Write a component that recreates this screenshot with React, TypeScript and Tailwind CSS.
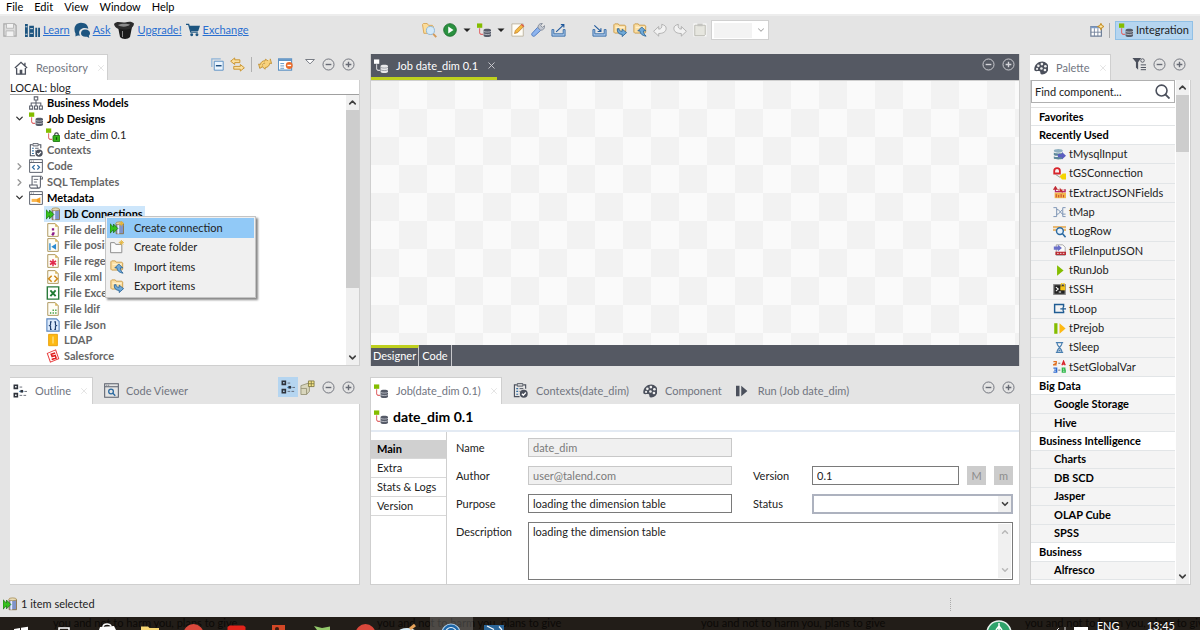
import type { ReactNode } from 'react';
import { clsx } from 'clsx';
import { ChevronDown, ChevronUp, ChevronRight, X } from 'lucide-react';

/* ---------- icons ---------- */

interface IconProps {
  className?: string;
  children?: ReactNode;
}

function Icon({ className = 'size-[14px]', children }: IconProps) {
  return (
    <svg viewBox="0 0 16 16" fill="none" aria-hidden="true" className={clsx('shrink-0', className)}>
      {children}
    </svg>
  );
}

function JobIcon({ className, light, locked }: { className?: string; light?: boolean; locked?: boolean }) {
  const disc = light ? '#e8e8ea' : '#565b68';
  return (
    <Icon className={className}>
      <rect x="0" y="0.5" width="6" height="5" fill={light ? '#fff' : '#84bd00'} />
      <path d="M3 6v5.5l1.5 1.5H7" stroke={light ? '#d6d6da' : '#e0696b'} strokeWidth="1.2" />
      {locked ? (
        <>
          <path d="M10 9V7.5a2 2 0 0 1 4 0V9" stroke="#3b3f49" strokeWidth="1.3" />
          <rect x="8" y="8.5" width="8" height="7" rx="1" fill="#36b31c" stroke="#17720d" />
          <path d="M12 10.5v3" stroke="#0d4d08" strokeWidth="1.4" />
        </>
      ) : (
        <>
          <path d="M7.500 8c0-2 8.500-2 8.500 0v6.500c0 2-8.500 2-8.500 0z" fill={disc} />
          <path d="M7.500 9.500c1 1.200 7.500 1.200 8.500 0M7.500 12.300c1 1.200 7.500 1.200 8.500 0" stroke={light ? '#8b8e97' : '#c9ccd4'} strokeWidth="0.900" />
        </>
      )}
    </Icon>
  );
}

function DbIcon({ className, star }: { className?: string; star?: boolean }) {
  return (
    <Icon className={className}>
      <path d="M7 3h8.5v11.5H7z" fill="#7f93c9" stroke="#8a6d3b" />
      <path d="M9.500 3v11.500" stroke="#e5ecff" strokeWidth="2" />
      <ellipse cx="11" cy="2.6" rx="4.4" ry="1.6" fill="#e8dcb8" stroke="#a08445" strokeWidth="0.8" />
      <path d="M0 3l4 4V3.5L9 8.5l-5 5V10l-4 4z" fill="#35c21c" stroke="#17650f" strokeWidth="0.8" />
      {star && <path d="M13 0v6M10 3h6M11 1l4 4M15 1l-4 4" stroke="#e2b33a" />}
    </Icon>
  );
}

function PaletteIcon({ className }: { className?: string }) {
  return (
    <Icon className={className}>
      <path d="M9.500 0.500A7.300 7.300 0 0 1 9 15.300c-2.500 0-1.200-2.700-2.400-3.600C5 10.500 0 13.500 0.300 9 0.600 4.500 4.500 0.500 9.500 0.500z" fill="#4b505c" />
      <circle cx="5" cy="5.500" r="1.500" fill="#eee" />
      <circle cx="9" cy="3.500" r="1.500" fill="#eee" />
      <circle cx="13" cy="6" r="1.500" fill="#eee" />
      <circle cx="12.500" cy="10.300" r="1.500" fill="#eee" />
      <circle cx="8.500" cy="8.500" r="1.500" fill="#eee" />
      <circle cx="3.500" cy="9" r="1.200" fill="#eee" />
    </Icon>
  );
}

function ContextsIcon({ className }: { className?: string }) {
  return (
    <Icon className={className}>
      <path d="M7 14.500H1.500V2H4M11 2h2.500v4" stroke="#4b505c" strokeWidth="1.200" />
      <path d="M4.500 0.700h6v2.600h-6z" stroke="#4b505c" />
      <path d="M3.500 6h2M3.500 9h2M3.500 12h2" stroke="#2c6aa0" strokeWidth="1.300" />
      <path d="M7 6h4M7 9h1" stroke="#4b505c" />
      <circle cx="11.500" cy="11.500" r="4.200" fill="#4b505c" />
      <path d="M9.500 11.500l1.500 1.600 2.700-3" stroke="#fff" strokeWidth="1.300" />
    </Icon>
  );
}

function OutlineIcon({ className }: { className?: string }) {
  return (
    <Icon className={className}>
      <path d="M1.500 1.500h3.500v3.500h-3.500zM1.500 11h3.500v3.500h-3.500z" stroke="#2f333c" strokeWidth="1.800" />
      <path d="M7.500 3.500h3M7.500 13h3M12 13h3M13 8.500h3" stroke="#5a5f6b" />
      <path d="M7 8.500h5" stroke="#4a90c8" strokeWidth="1.400" />
      <rect x="8.500" y="6.800" width="3" height="3" fill="#2f333c" />
    </Icon>
  );
}

function WindowIcon({ className, children }: IconProps) {
  return (
    <Icon className={className}>
      <path d="M0.700 0.700h14.600v14.600H0.700zM0.700 4h14.600" stroke="#5a5f6b" strokeWidth="1.100" />
      <path d="M2.500 2.400h1M4.500 2.400h1" stroke="#5a5f6b" />
      {children}
    </Icon>
  );
}

function FileIcon({ children }: IconProps) {
  return (
    <Icon>
      <path d="M2 0.700h8.500L14 4.200v11.100H2z" fill="#fffdf5" stroke="#a58d4f" />
      <path d="M10.500 0.700v3.500H14z" fill="#d7b55a" />
      {children}
    </Icon>
  );
}

function FolderItemsIcon({ className, up }: { className?: string; up?: boolean }) {
  return (
    <Icon className={className}>
      <path d="M1 10.500V2l1-1h4l1 1.500h6.500l1 1v7l-1 1H2z" fill="#fbdfa5" stroke="#c9973f" />
      <path d="M3 5h10" stroke="#fff0cc" strokeWidth="1.500" />
      {up ? (
        <path d="M10 4.500L5.500 9H8c0 3 2.500 5.500 7 6-2-1.500-3-3.500-3-6h2.500z" fill="#6fa9d8" stroke="#1f5c93" strokeWidth="0.900" />
      ) : (
        <path d="M5 6.500c-0.500 4 1.500 6.500 5.500 6.500v2.500L15.500 11 10.500 7v2.500C8 9.500 6.800 8.500 7 6.500z" fill="#6fa9d8" stroke="#1f5c93" strokeWidth="0.900" />
      )}
    </Icon>
  );
}

function TrayIcon({ inward }: { inward?: boolean }) {
  return (
    <Icon className="size-[15px]">
      <path d="M1 7v7h14V7h-2v4.500H3V7z" fill="#a9c8ec" stroke="#3a6ea8" />
      {inward ? (
        <path d="M2.500 2.500l7 6.500M9.500 5.500v3.500H6" stroke="#20599c" strokeWidth="1.200" />
      ) : (
        <path d="M5.500 9.500l8-7.500M10.500 1.700h3.200v3.200" stroke="#20599c" strokeWidth="1.200" />
      )}
    </Icon>
  );
}

function MinIcon({ className = 'text-[#666a74]' }: { className?: string }) {
  return (
    <Icon className={clsx('size-[13px]', className)}>
      <circle cx="8" cy="8" r="6.800" stroke="currentColor" strokeWidth="1.100" />
      <path d="M4.500 8h7" stroke="currentColor" strokeWidth="1.700" />
    </Icon>
  );
}

function MaxIcon({ className = 'text-[#666a74]' }: { className?: string }) {
  return (
    <Icon className={clsx('size-[13px]', className)}>
      <circle cx="8" cy="8" r="6.800" stroke="currentColor" strokeWidth="1.100" />
      <path d="M4.500 8h7M8 4.500v7" stroke="currentColor" strokeWidth="1.700" />
    </Icon>
  );
}

/* ---------- shared bits ---------- */

function IconButton({ label, className, children }: { label: string; className?: string; children: ReactNode }) {
  return (
    <button type="button" aria-label={label} className={clsx('flex shrink-0 items-center justify-center', className)}>
      {children}
    </button>
  );
}

function WindowButtons({ className }: { className?: string }) {
  return (
    <div className="flex items-center gap-[7px]">
      <IconButton label="Minimize">
        <MinIcon className={className} />
      </IconButton>
      <IconButton label="Maximize">
        <MaxIcon className={className} />
      </IconButton>
    </div>
  );
}

function ActiveTab({ icon, label, className }: { icon: ReactNode; label: string; className?: string }) {
  return (
    <button
      type="button"
      className={clsx(
        'flex items-center border-t border-r border-[#cfcfcf] bg-white pr-1 whitespace-nowrap text-[#71757f]',
        className
      )}
    >
      {icon}
      <span>{label}</span>
      <X className="ml-auto size-[10px] shrink-0 text-[#d4d4d4]" strokeWidth={1.5} />
    </button>
  );
}

function ScrollBar({ children }: { children?: ReactNode }) {
  return (
    <div className="flex w-[13px] shrink-0 flex-col items-center bg-[#f0f0f0]">
      <div className="flex h-[15px] items-center">
        <ChevronUp className="size-[11px] text-[#404040]" strokeWidth={3.5} />
      </div>
      {children}
      <div className="mt-auto flex h-[15px] items-center">
        <ChevronDown className="size-[11px] text-[#404040]" strokeWidth={3.5} />
      </div>
    </div>
  );
}

/* ---------- top bars ---------- */

function MenuBar() {
  return (
    <nav className="flex h-[14px] shrink-0 items-center gap-[11px] bg-white pl-[6px] text-black">
      {['File', 'Edit', 'View', 'Window', 'Help'].map((item) => (
        <button key={item} type="button">
          {item}
        </button>
      ))}
    </nav>
  );
}

function ToolLink({ icon, label }: { icon: ReactNode; label: string }) {
  return (
    <a href="#" className="flex items-center gap-[3px] text-[#2a6fd0] underline">
      {icon}
      {label}
    </a>
  );
}

function Toolbar() {
  return (
    <div className="flex h-[30px] shrink-0 items-center border-t-2 border-[#ededed] pr-[7px]">
      <div className="flex w-[422px] shrink-0 items-center gap-[4px] pl-[3px]">
        <IconButton label="Save" className="mr-[4px]">
          <Icon>
            <path d="M1 1h12l2 2v12H1z" fill="#ddd" stroke="#aaa" strokeWidth="1.400" />
            <path d="M4 1v5h8V1M3.500 15V9h9v6" fill="#f2f2f2" stroke="#b5b5b5" />
          </Icon>
        </IconButton>
        <ToolLink
          label="Learn"
          icon={
            <Icon className="size-[15px]">
              <path d="M0 1h3v14H0zM4.500 3h5v12h-5zM11 5h2v10h-2zM14 5h2v10h-2z" fill="#1d5580" />
              <path d="M5.500 6h3M5.500 11h3M0.500 4h2M0.500 12h2" stroke="#e4e4e4" />
            </Icon>
          }
        />
        <ToolLink
          label="Ask"
          icon={
            <Icon className="size-[16px]">
              <path d="M1.500 11.500C-0.500 8 0 1 7 0.700c5 0 7 2.800 7.300 6C12 5.500 8 5.500 6 8c-1.300 1.700-1.200 4 0.200 5.800C4.500 13 3 13.500 1.500 14.500z" fill="#1d5580" />
              <path d="M11 7.500c3.500 0 5 1.800 5 3.700 0 1-0.500 2-1.200 2.600l0.500 2.200-2.300-1.300c-4 0.500-6-1.300-6-3.500s1.800-3.700 4-3.700z" fill="#1d5580" />
            </Icon>
          }
        />
        <ToolLink
          label="Upgrade!"
          icon={
            <svg viewBox="0 0 20 18" className="h-[18px] w-[20px] shrink-0" aria-hidden="true">
              <path d="M4 6l2 10c2 2.500 8 2.500 10 0l2-10z" fill="#1b1b1b" />
              <path d="M0 3C3-0.500 7 2 11 1.500c4-1 7-1 9 1-0.500 5-5 6-9 6C6 8.500 1 8 0 3z" fill="#2c2c2c" />
              <path d="M4 4c3-1.500 9-1.500 12-0.500-2 2.500-9 3-12 0.500z" fill="#8c8c8c" />
              <path d="M8.500 10v6" stroke="#8a8a8a" />
            </svg>
          }
        />
        <ToolLink
          label="Exchange"
          icon={
            <Icon>
              <path d="M0 1.500h3l2.500 9h8" stroke="#1d5580" strokeWidth="1.500" fill="none" />
              <path d="M3.500 3H16l-2 6H5.200z" fill="#1d5580" />
              <circle cx="6.500" cy="13.500" r="1.700" fill="#1d5580" />
              <circle cx="12.500" cy="13.500" r="1.700" fill="#1d5580" />
            </Icon>
          }
        />
      </div>

      <div className="flex shrink-0 items-center gap-[6px]">
        <IconButton label="Find">
          <Icon className="size-[15px]">
            <path d="M0.500 1.500l1-1h4L7 2.500h4l1 1V10l-1 1H2z" fill="#fbdc9a" stroke="#d9a85a" />
            <circle cx="9" cy="8" r="4.300" fill="#d3e9f9" stroke="#8db4d4" />
            <path d="M12 11.500l3.200 3.500" stroke="#d39a5a" strokeWidth="2" />
          </Icon>
        </IconButton>
        <IconButton label="Run">
          <Icon>
            <circle cx="8" cy="8" r="7.200" fill="#2a9140" stroke="#1d6f2d" />
            <path d="M6 4l6 4-6 4z" fill="#fff" />
          </Icon>
        </IconButton>
        <IconButton label="Run history">
          <Icon className="size-[8px]">
            <path d="M1 5h14l-7 7z" fill="#222" />
          </Icon>
        </IconButton>
        <IconButton label="New job">
          <JobIcon />
        </IconButton>
        <IconButton label="New item">
          <Icon className="size-[8px]">
            <path d="M1 5h14l-7 7z" fill="#222" />
          </Icon>
        </IconButton>
        <IconButton label="Edit">
          <Icon>
            <path d="M1 1h13v14H1z" fill="#fffdf6" stroke="#b9b19b" />
            <path d="M4 12l1-3.500L12 1.500l2.500 2.500-7 7z" fill="#f4b942" stroke="#b9772a" strokeWidth="0.800" />
            <path d="M12 1.500L14.500 4" stroke="#d8554a" strokeWidth="1.500" />
          </Icon>
        </IconButton>
        <IconButton label="Project settings">
          <Icon>
            <path d="M1.500 14.500c-1-1-1-2 0-3l6-6.500 3.500 3.500-6.500 6c-1 1-2 1-3 0z" fill="#8db4ee" stroke="#4a76bd" />
            <path d="M8 5.500c-0.500-3 2-5.500 5-5L11 3l2 2 2.500-2c0.500 3-1.500 5.500-4.500 5.200z" fill="#c4c9d2" stroke="#858c98" />
          </Icon>
        </IconButton>
        <IconButton label="Export" className="mr-[20px]">
          <TrayIcon />
        </IconButton>
        <IconButton label="Import">
          <TrayIcon inward />
        </IconButton>
        <IconButton label="Export items">
          <FolderItemsIcon />
        </IconButton>
        <IconButton label="Import items">
          <FolderItemsIcon up />
        </IconButton>
        <IconButton label="Undo">
          <Icon>
            <path d="M0.700 9.500L6.500 4v3C9.500 7 10.500 5 10 1.500c3 1 5 2 5 4.500 0 4.500-4 6-8.500 6v3z" fill="#f2f2f2" stroke="#aaa" />
          </Icon>
        </IconButton>
        <IconButton label="Redo">
          <Icon>
            <path d="M15.300 9.500L9.500 4v3C6.500 7 5.500 5 6 1.500 3 2.500 1 3.500 1 6c0 4.500 4 6 8.500 6v3z" fill="#f2f2f2" stroke="#aaa" />
          </Icon>
        </IconButton>
        <div className="flex items-center gap-[4px]">
          <IconButton label="Paste">
            <Icon>
              <path d="M0.500 0.500h15v15H0.500z" fill="#fafafa" />
              <path d="M2 2.500h12v11l-1 1H2z" fill="#e6e6df" stroke="#b5b5ad" />
              <path d="M5 0.700h6v3H5z" fill="#c4c4c0" />
            </Icon>
          </IconButton>
          <div className="relative flex h-[20px] w-[58px] items-center border border-[#d0d0d0] bg-white pl-[2px]">
            <select aria-label="Zoom" disabled className="h-[15px] w-[38px] appearance-none bg-[#f3f3f3]">
              <option></option>
            </select>
            <ChevronDown className="pointer-events-none absolute right-[2px] size-[10px] text-[#a8a8a8]" strokeWidth={2.5} />
          </div>
        </div>
      </div>

      <div className="ml-auto flex items-center gap-[5px]">
        <IconButton label="Open perspective">
          <Icon>
            <path d="M1 4h12v11H1z" fill="#fff" stroke="#6f7f98" strokeWidth="1.400" />
            <path d="M1 5h12" stroke="#7d9cc8" strokeWidth="2" />
            <path d="M5 6v9M9 6v9M1 10.500h12" stroke="#6f7f98" />
            <path d="M12.500 0.500l1.200 2.300L16 4l-2.300 1.200L12.500 7.500l-1.200-2.300L9 4l2.300-1.200z" fill="#fbe9a9" stroke="#c9922b" strokeWidth="1.200" />
          </Icon>
        </IconButton>
        <div className="h-[15px] w-px bg-[#aaa]" />
        <button
          type="button"
          className="flex h-[19px] items-center gap-[3px] border border-[#90c0e6] bg-[#b5d5f0] px-[3px] text-[#222]"
        >
          <JobIcon />
          Integration
        </button>
      </div>
    </div>
  );
}

/* ---------- repository ---------- */

interface TreeNode {
  label: string;
  icon: ReactNode;
  level?: number;
  arrow?: 'open' | 'closed';
  tone?: string;
  selected?: boolean;
}

const TREE: TreeNode[] = [
  {
    label: 'Business Models',
    tone: 'font-bold text-black',
    icon: (
      <Icon>
        <path d="M6 1h4v3.500H6zM0.700 11.500h3.500V15H0.700zM6.300 11.500h3.400V15H6.300zM11.800 11.500h3.500V15h-3.500zM8 4.500v7M2.500 11.500V8h11v3.500" stroke="#5a5f6b" strokeWidth="1.200" />
      </Icon>
    ),
  },
  { label: 'Job Designs', tone: 'font-bold text-black', arrow: 'open', icon: <JobIcon /> },
  { label: 'date_dim 0.1', level: 1, tone: 'text-[#222]', icon: <JobIcon locked /> },
  { label: 'Contexts', icon: <ContextsIcon /> },
  {
    label: 'Code',
    arrow: 'closed',
    icon: (
      <WindowIcon>
        <path d="M6.500 7L4 9.500 6.500 12M9.500 7L12 9.500 9.500 12" stroke="#2c6aa0" strokeWidth="1.400" />
      </WindowIcon>
    ),
  },
  {
    label: 'SQL Templates',
    arrow: 'closed',
    icon: (
      <Icon>
        <path d="M3.500 11V1.500h11c-1.500 0-1.500 1-1.500 3h2.300V2M13 4.500v8c0 2-1 2.500-2 2.500H2.500C0.500 15 0.700 12 0.700 11.500h8.500c0 2 0.300 3.500 1.800 3.500" stroke="#5a5f6b" strokeWidth="1.200" />
        <path d="M5.500 5h5M5.500 8h3.500" stroke="#5a5f6b" />
      </Icon>
    ),
  },
  {
    label: 'Metadata',
    tone: 'font-bold text-black',
    arrow: 'open',
    icon: (
      <WindowIcon>
        <path d="M3 9h7v3.500H3z" fill="#f9b54c" />
        <path d="M9 9l4-2v7l-4-1.500z" fill="#f09a1f" />
      </WindowIcon>
    ),
  },
  { label: 'Db Connections', level: 1, tone: 'font-bold text-black', selected: true, icon: <DbIcon /> },
  {
    label: 'File delimited',
    level: 1,
    icon: (
      <FileIcon>
        <path d="M8 6v2.500M8.500 10.500V12L7 14" stroke="#8a1b8a" strokeWidth="2.600" />
      </FileIcon>
    ),
  },
  {
    label: 'File positional',
    level: 1,
    icon: (
      <FileIcon>
        <path d="M4.500 6v8" stroke="#2c8ad0" strokeWidth="1.500" />
        <path d="M11.500 6.500L6 10l5.500 3.500z" fill="#2c8ad0" />
      </FileIcon>
    ),
  },
  {
    label: 'File regex',
    level: 1,
    icon: (
      <FileIcon>
        <path d="M8 6v8M4.500 8l7 4M11.500 8l-7 4" stroke="#e0284a" strokeWidth="1.700" />
      </FileIcon>
    ),
  },
  {
    label: 'File xml',
    level: 1,
    icon: (
      <FileIcon>
        <path d="M6.500 6.500L3 10l3.500 3.500M9.500 6.500L13 10l-3.500 3.500" stroke="#d08a1a" strokeWidth="1.800" />
      </FileIcon>
    ),
  },
  {
    label: 'File Excel',
    level: 1,
    icon: (
      <Icon>
        <path d="M1.500 1h13v14h-13z" fill="#fff" stroke="#2a7a3a" strokeWidth="1.600" />
        <path d="M5 5l6 6.500M11 5l-6 6.500" stroke="#1f7a33" strokeWidth="2.200" />
      </Icon>
    ),
  },
  {
    label: 'File ldif',
    level: 1,
    icon: (
      <FileIcon>
        <path d="M4.500 12.500H6M7.500 12.500H9M10.500 12.500H12M7.500 9.500H9M10.500 9.500H12" stroke="#3a9a3a" strokeWidth="1.700" />
      </FileIcon>
    ),
  },
  {
    label: 'File Json',
    level: 1,
    icon: (
      <Icon>
        <path d="M1 1h11l3 3v11H1z" fill="#dceafb" stroke="#5a86c0" strokeWidth="1.300" />
        <path d="M6.500 4.500H5.200V8L4 8.700l1.200 0.800V13h1.300M9.500 4.500h1.300V8l1.200 0.700-1.200 0.800V13H9.500" stroke="#1f3f70" strokeWidth="1.300" />
      </Icon>
    ),
  },
  {
    label: 'LDAP',
    level: 1,
    icon: (
      <Icon>
        <path d="M3 1.500h10v13H3z" fill="#fdb913" stroke="#e89c00" />
        <path d="M8 4v8" stroke="#ffe08a" strokeWidth="1.500" />
      </Icon>
    ),
  },
  {
    label: 'Salesforce',
    level: 1,
    icon: (
      <Icon>
        <path d="M1.500 5L11 1l3.500 10L5 15z" stroke="#e84040" strokeWidth="1.200" />
        <path d="M10.500 4.500L6 6l1 2.500 3.500-1 1 2.800L6.500 12" stroke="#e02020" strokeWidth="1.800" />
      </Icon>
    ),
  },
];

const CONTEXT_MENU = [
  { label: 'Create connection', icon: <DbIcon star />, active: true },
  {
    label: 'Create folder',
    icon: (
      <Icon>
        <path d="M0.700 14.500V3h4.500l1.300 2h7v9.500z" fill="#fafafa" stroke="#8a8a8a" strokeWidth="1.100" />
        <path d="M13 0v6M10 3h6M11 1l4 4M15 1l-4 4" stroke="#e2b33a" />
      </Icon>
    ),
  },
  { label: 'Import items', icon: <FolderItemsIcon up /> },
  { label: 'Export items', icon: <FolderItemsIcon /> },
];

function TreeRow({ node }: { node: TreeNode }) {
  return (
    <li className={clsx('flex min-h-0 flex-1 items-center', node.level ? 'pl-[34px]' : 'pl-[4px]')}>
      {!node.level && (
        <span className="mr-[2px] flex w-[11px] shrink-0">
          {node.arrow === 'open' && <ChevronDown className="size-[11px] text-[#333]" strokeWidth={3} />}
          {node.arrow === 'closed' && <ChevronRight className="size-[11px] text-[#999]" strokeWidth={3} />}
        </span>
      )}
      <span
        className={clsx(
          'flex h-full items-center gap-[4px] pr-[2px] pl-[2px] whitespace-nowrap',
          node.selected && 'bg-[#cde6fb]',
          node.tone ?? 'font-bold text-[#666]'
        )}
      >
        {node.icon}
        {node.label}
      </span>
    </li>
  );
}

function Repository() {
  return (
    <section className="relative flex min-h-0 flex-[3] flex-col">
      <div className="flex h-[26px] shrink-0 justify-between">
        <ActiveTab
          className="w-[98px] gap-[8px] pl-[4px]"
          label="Repository"
          icon={
            <Icon>
              <path d="M1 8l7-6.500L15 8M12.500 2v3" stroke="#4b505c" strokeWidth="1.500" />
              <path d="M3 8v7h10V8" stroke="#4b505c" strokeWidth="1.500" />
              <path d="M6.500 10h3v5h-3z" fill="#4b505c" />
            </Icon>
          }
        />
        <div className="flex h-[20px] items-center gap-[6px] pr-[5px]">
          <IconButton label="Collapse all">
            <Icon className="size-[13px]">
              <path d="M1 11V1h11" stroke="#8fb4d8" strokeWidth="1.500" />
              <path d="M4 4h11v11H4z" fill="#eaf4fd" stroke="#5f93c4" strokeWidth="1.200" />
              <path d="M6 9.500h7" stroke="#1f4f80" strokeWidth="1.800" />
            </Icon>
          </IconButton>
          <IconButton label="Link with editor">
            <Icon className="size-[15px]">
              <path d="M0.700 4.500L5 1v2h5.500v3H5v2z" fill="#fbe0a0" stroke="#c9922b" />
              <path d="M15.300 11.500L11 8v2H4v3h7v2z" fill="#fbe0a0" stroke="#c9922b" />
            </Icon>
          </IconButton>
          <div className="h-[15px] w-px bg-[#b0b0b0]" />
          <IconButton label="Refresh">
            <Icon>
              <path d="M2 13L0.700 8l2 0.500C3.500 5.500 5.500 4 8 4.500l0.500-2L13 5.500 8.500 9 8 7C6.500 7 5.500 8 5.200 9.500l2 0.500z" fill="#f8d27c" stroke="#b98522" strokeWidth="0.900" />
              <path d="M14 2l1.500 5.500-2-0.500c-0.500 3-2.500 5-5 5L8 14l-3.500-3.500" fill="#f8d27c" stroke="#b98522" strokeWidth="0.900" />
            </Icon>
          </IconButton>
          <IconButton label="Filter">
            <Icon className="size-[15px]">
              <path d="M0.500 2h14v12H0.500z" fill="#fff" stroke="#5f93c4" strokeWidth="1.200" />
              <path d="M1 3.300h13" stroke="#5f93c4" strokeWidth="2" />
              <path d="M2.500 7h4M2.500 9.500h4M2.500 12h4" stroke="#5f93c4" />
              <circle cx="12" cy="9" r="3.700" fill="#e86a2a" />
              <path d="M10 9h4" stroke="#fff" strokeWidth="1.500" />
            </Icon>
          </IconButton>
          <IconButton label="View menu" className="mr-[1px] mb-[4px] ml-[6px]">
            <Icon className="size-[10px]">
              <path d="M1 4h14l-7 7z" fill="#fff" stroke="#666a74" strokeWidth="1.400" />
            </Icon>
          </IconButton>
          <WindowButtons />
        </div>
      </div>

      <div className="flex min-h-0 flex-1 flex-col border-r border-b border-[#cfcfcf] bg-white">
        <p className="h-[15px] shrink-0 border-b border-[#a0a0a0] leading-[15px] text-[#222]">LOCAL: blog</p>
        <div className="flex min-h-0 flex-1">
          <ul className="flex min-w-0 flex-1 flex-col pb-[1px]">
            {TREE.map((node) => (
              <TreeRow key={node.label} node={node} />
            ))}
          </ul>
          <ScrollBar>
            <div className="h-[178px] w-[13px] bg-[#cdcdcd]" />
          </ScrollBar>
        </div>
      </div>

      {/* Context menu of the selected tree node */}
      <div
        role="menu"
        className="absolute top-[162px] left-[95px] flex h-[82px] w-[151px] flex-col border border-[#c4c4c4] bg-[#f0f0f0] p-px shadow-[2px_2px_2px_#888]"
      >
        {CONTEXT_MENU.map((item) => (
          <button
            key={item.label}
            type="button"
            role="menuitem"
            className={clsx(
              'flex min-h-0 flex-1 items-center gap-[10px] pl-[3px] text-[#222]',
              item.active && 'bg-[#91c9f7]'
            )}
          >
            {item.icon}
            {item.label}
          </button>
        ))}
      </div>
    </section>
  );
}

function Outline() {
  return (
    <section className="flex min-h-0 flex-[2] flex-col">
      <div className="flex h-[27px] shrink-0">
        <ActiveTab className="w-[83px] gap-[8px] pl-[3px]" label="Outline" icon={<OutlineIcon />} />
        <button type="button" className="flex items-center gap-[7px] pl-[11px] text-[#71757f]">
          <WindowIcon className="size-[15px]">
            <circle cx="7.500" cy="9" r="2.500" stroke="#2c6aa0" strokeWidth="1.400" />
            <path d="M9.500 11l2.500 2.500" stroke="#2c6aa0" strokeWidth="1.500" />
          </WindowIcon>
          Code Viewer
        </button>
        <div className="ml-auto flex h-[20px] items-center gap-[7px] pr-[5px]">
          <div className="flex items-center gap-[2px]">
            <IconButton label="Outline view" className="size-[20px] bg-[#b5d5f0]">
              <OutlineIcon />
            </IconButton>
            <IconButton label="Thumbnail view">
              <Icon className="size-[15px]">
                <path d="M1 6l9-3v9l-3 3.500H1z" fill="#d9d6bd" stroke="#9a967a" />
                <path d="M1 9h6v6.500" stroke="#9a967a" />
                <path d="M9 1h6v6H9zM12 1v6M9 4h6" fill="#f7e78a" stroke="#7d7540" strokeWidth="0.900" />
              </Icon>
            </IconButton>
          </div>
          <WindowButtons />
        </div>
      </div>
      <div className="flex-1 border-r border-b border-[#cfcfcf] bg-white" />
    </section>
  );
}

/* ---------- editor ---------- */

function JobEditor() {
  return (
    <section className="flex min-h-0 flex-[3] flex-col border-r border-l border-[#cfcfcf]">
      <div className="flex h-[26px] shrink-0 justify-between bg-[#555963]">
        <button
          type="button"
          className="flex w-[126px] items-center gap-[8px] border-b-[3px] border-[#bfd01e] pr-[3px] pl-[3px] whitespace-nowrap text-white"
        >
          <JobIcon light />
          <span>Job date_dim 0.1</span>
          <X className="ml-auto size-[11px] shrink-0 text-[#d0d0d4]" strokeWidth={2} />
        </button>
        <div className="flex h-[20px] items-center pr-[4px]">
          <WindowButtons className="text-[#d5d5da]" />
        </div>
      </div>
      <div className="flex-1 border-t border-[#cfcfcf] bg-[repeating-conic-gradient(#fafafa_0_25%,#f2f2f2_0_50%)] bg-[length:56px_56px]" />
      <div className="flex h-[21px] shrink-0 bg-[#555963] text-white">
        <button type="button" className="border-t-[3px] border-r border-t-[#bfd01e] border-r-[#c8c8cc] px-[2px] pb-[3px]">
          Designer
        </button>
        <button type="button" className="border-r border-[#c8c8cc] px-[3px]">
          Code
        </button>
      </div>
    </section>
  );
}

const fieldBase = 'h-[19px] min-w-0 border px-[4px]';
const readOnlyField = 'w-full border-[#c8c8c8] bg-[#f0f0f0] text-[#7a7a7a]';
const editField = 'border-[#7a7a7a] bg-white text-[#222]';

function JobForm() {
  return (
    <form className="grid min-w-0 flex-1 grid-cols-[72px_205fr_80px_200fr] grid-rows-[19px_19px_19px_1fr] gap-y-[9px] pt-[6px] pr-[6px] pb-[4px] pl-[9px] text-[#222]">
      <label htmlFor="name" className="self-center">Name</label>
      <input id="name" readOnly defaultValue="date_dim" className={clsx(fieldBase, readOnlyField)} />

      <label htmlFor="author" className="col-start-1 self-center">Author</label>
      <input id="author" readOnly defaultValue="user@talend.com" className={clsx(fieldBase, readOnlyField)} />
      <label htmlFor="version" className="self-center pl-[21px]">Version</label>
      <div className="flex gap-[8px]">
        <input id="version" defaultValue="0.1" className={clsx(fieldBase, editField, 'flex-1')} />
        <button type="button" className="w-[19px] bg-[#cccccc] text-[#8c8c8c]">M</button>
        <button type="button" className="w-[19px] bg-[#cccccc] text-[#8c8c8c]">m</button>
      </div>

      <label htmlFor="purpose" className="self-center">Purpose</label>
      <input
        id="purpose"
        defaultValue="loading the dimension table"
        className={clsx(fieldBase, editField, 'w-full')}
      />
      <label htmlFor="status" className="self-center pl-[21px]">Status</label>
      <div className="relative">
        <select id="status" className="h-[20px] w-full appearance-none border-2 border-[#adb2bf] bg-white">
          <option></option>
        </select>
        <span className="pointer-events-none absolute top-[2px] right-[2px] flex h-[16px] w-[13px] items-center justify-center bg-[#f0f0f0]">
          <ChevronDown className="size-[10px] text-[#404040]" strokeWidth={4} />
        </span>
      </div>

      <label htmlFor="description" className="pt-[3px]">Description</label>
      <div className="col-span-3 flex border border-[#7a7a7a]">
        <textarea
          id="description"
          defaultValue="loading the dimension table"
          className="min-w-0 flex-1 resize-none overflow-hidden px-[4px] pt-[2px]"
        />
        <div className="m-px flex w-[13px] flex-col items-center justify-between bg-[#f0f0f0] py-[3px] text-[#b8b8b8]">
          <ChevronUp className="size-[10px]" strokeWidth={3.5} />
          <ChevronDown className="size-[10px]" strokeWidth={3.5} />
        </div>
      </div>
    </form>
  );
}

function JobSettings() {
  const tabs = [
    { label: 'Contexts(date_dim)', icon: <ContextsIcon className="size-[15px]" /> },
    { label: 'Component', icon: <PaletteIcon className="size-[14px]" /> },
    {
      label: 'Run (Job date_dim)',
      icon: (
        <Icon>
          <path d="M0 2h4v12H0zM6 2l7 6-7 6z" fill="#4b505c" />
        </Icon>
      ),
    },
  ];
  return (
    <section className="flex min-h-0 flex-[2] flex-col border-l border-[#cfcfcf]">
      <div className="flex h-[27px] shrink-0">
        <ActiveTab className="w-[131px] gap-[8px] pl-[3px]" label="Job(date_dim 0.1)" icon={<JobIcon />} />
        <div className="flex gap-[14px] pl-[11px] text-[#71757f]">
          {tabs.map((tab) => (
            <button key={tab.label} type="button" className="flex items-center gap-[8px]">
              {tab.icon}
              {tab.label}
            </button>
          ))}
        </div>
        <div className="ml-auto flex h-[20px] items-center pr-[5px]">
          <WindowButtons />
        </div>
      </div>
      <div className="flex min-h-0 flex-1 flex-col border-r border-b border-[#cfcfcf] bg-white">
        <h1 className="flex h-[28px] shrink-0 items-center gap-[5px] border-b-2 border-[#e3eaf3] pl-[3px] text-[14px] font-bold text-black">
          <JobIcon />
          date_dim 0.1
        </h1>
        <div className="flex min-h-0 flex-1">
          <div className="flex w-[76px] shrink-0 flex-col border-r border-[#cfcfcf] pt-[8px] text-[#222]">
            {['Main', 'Extra', 'Stats & Logs', 'Version'].map((item, i) => (
              <button
                key={item}
                type="button"
                className={clsx(
                  'h-[19px] border-b border-[#d8d8d8] pl-[6px] text-left',
                  i === 0 && 'bg-[#d0d0d0] font-bold text-black'
                )}
              >
                {item}
              </button>
            ))}
          </div>
          <JobForm />
        </div>
      </div>
    </section>
  );
}

/* ---------- palette ---------- */

interface PaletteRow {
  label: string;
  kind: 'heading' | 'group' | 'item';
  icon?: ReactNode;
}

const PALETTE: PaletteRow[] = [
  { label: 'Favorites', kind: 'heading' },
  { label: 'Recently Used', kind: 'heading' },
  {
    label: 'tMysqlInput',
    kind: 'item',
    icon: (
      <>
        <ellipse cx="6.500" cy="3.500" rx="5.500" ry="2.200" fill="#8fb0c0" />
        <path d="M1 5.500c2 1.500 9 1.500 11 0v3c-2 1.500-9 1.500-11 0zM1 10c2 1.500 9 1.500 11 0v3c-2 1.500-9 1.500-11 0z" fill="#5d8799" />
        <path d="M6 7.500h5V5l5 4.500-5 4.500v-2.500H6z" fill="#5b5fc0" />
      </>
    ),
  },
  {
    label: 'tGSConnection',
    kind: 'item',
    icon: (
      <>
        <path d="M1.500 8V5a3.500 3.500 0 0 1 7 0v3z" stroke="#d8232a" strokeWidth="2.200" />
        <path d="M3 9l6 4" stroke="#888" />
        <path d="M8 11.500l4-3.500h4v7.500h-5z" fill="#f4d400" />
      </>
    ),
  },
  {
    label: 'tExtractJSONFields',
    kind: 'item',
    icon: (
      <>
        <path d="M2 8h14v7H2z" fill="#f2b84b" />
        <path d="M3 1v6h12V4" stroke="#b3266e" strokeWidth="1.500" />
        <path d="M1 4l2-3 2 3zM6 5h2M9 7V4l2 3V4M13 5h2" stroke="#c22a2a" strokeWidth="1.300" />
        <path d="M4 10v4M7 11v3M10 10v4M13 11v3" stroke="#c22a2a" />
      </>
    ),
  },
  {
    label: 'tMap',
    kind: 'item',
    icon: <path d="M0.500 2h4v11h-4M4.500 4.500h2l5 5.500h4M4.500 10h2l5-5.500M15.500 2h-3.500v11h3.500" stroke="#7d95b5" strokeWidth="1.200" />,
  },
  {
    label: 'tLogRow',
    kind: 'item',
    icon: (
      <>
        <path d="M0 2.500h16M0 6h4M13 6h3" stroke="#e8b871" strokeWidth="2.600" />
        <circle cx="8.500" cy="7.500" r="4.200" fill="#e6f1fb" stroke="#2c6aa0" strokeWidth="1.800" />
        <path d="M11.500 10.500l4 4.500" stroke="#2c6aa0" strokeWidth="2" />
      </>
    ),
  },
  {
    label: 'tFileInputJSON',
    kind: 'item',
    icon: (
      <>
        <path d="M4 1h8l3 3v10H4z" fill="#fafafa" stroke="#9a9a9a" />
        <path d="M1 3h5V1l5 4-5 4V7H1z" fill="#6a6fc8" />
        <path d="M3 9.500h13v4H3z" fill="#b8282f" />
        <path d="M5 11.500h2M8.500 11.500h2M12 11.500h2" stroke="#fff" />
      </>
    ),
  },
  { label: 'tRunJob', kind: 'item', icon: <path d="M5 1.500L13 8l-8 6.500z" fill="#84bd00" /> },
  {
    label: 'tSSH',
    kind: 'item',
    icon: (
      <>
        <path d="M1 2h14v12H1z" fill="#222" stroke="#888" strokeWidth="1.500" />
        <path d="M3.500 5l3 2.500-3 2.500M7 11h3" stroke="#fff" strokeWidth="1.300" />
        <path d="M9 4h6v5H9z" fill="#f5c518" />
        <path d="M10 4V2a2 2 0 0 1 4 0v2" stroke="#f5c518" strokeWidth="1.300" />
      </>
    ),
  },
  {
    label: 'tLoop',
    kind: 'item',
    icon: (
      <>
        <path d="M13 6V3H2v10h11v-2" stroke="#1f5c93" strokeWidth="1.800" />
        <path d="M9 8.500h7M12.500 6v5" stroke="#1f5c93" strokeWidth="1.600" />
      </>
    ),
  },
  {
    label: 'tPrejob',
    kind: 'item',
    icon: (
      <>
        <path d="M1.500 1.500h4v13h-4z" fill="#84bd00" />
        <path d="M8 1.500L15.500 8 8 14.500z" fill="#fdb913" />
      </>
    ),
  },
  {
    label: 'tSleep',
    kind: 'item',
    icon: (
      <>
        <path d="M3.500 2h9M3.500 14h9M5 2c0 4 2 4 3 6 1-2 3-2 3-6M5 14c0-4 2-4 3-6 1 2 3 2 3 6" stroke="#4a7fb0" strokeWidth="1.400" />
        <path d="M6 12.500h4L8 10z" fill="#4a7fb0" />
      </>
    ),
  },
  {
    label: 'tSetGlobalVar',
    kind: 'item',
    icon: (
      <>
        <path d="M0.500 2h3.500v2l-3.500 2h4" stroke="#e07020" strokeWidth="1.600" />
        <path d="M6.500 4h2.500" stroke="#777" strokeWidth="1.300" />
        <path d="M11 6.500L13 1.500l2 5M11.500 5h3" stroke="#d8232a" strokeWidth="1.600" />
        <path d="M0.500 10h4v5h-4M1.500 12.500H4" stroke="#2c6ad0" strokeWidth="1.600" />
        <path d="M6.500 12.500h2.500" stroke="#777" strokeWidth="1.300" />
        <path d="M11.500 10h3v2.500h-3zM11.500 12.500h3.500V15h-3.500z" stroke="#2fb84a" strokeWidth="1.600" />
      </>
    ),
  },
  { label: 'Big Data', kind: 'heading' },
  { label: 'Google Storage', kind: 'group' },
  { label: 'Hive', kind: 'group' },
  { label: 'Business Intelligence', kind: 'heading' },
  { label: 'Charts', kind: 'group' },
  { label: 'DB SCD', kind: 'group' },
  { label: 'Jasper', kind: 'group' },
  { label: 'OLAP Cube', kind: 'group' },
  { label: 'SPSS', kind: 'group' },
  { label: 'Business', kind: 'heading' },
  { label: 'Alfresco', kind: 'group' },
];

const rowStyle = {
  heading: 'grow-[20] bg-white pl-[8px] font-bold text-black',
  group: 'grow-[20] bg-[#f4f4f4] pl-[23px] font-bold text-black',
  item: 'grow-[21] bg-[#f4f4f4] pl-[22px] text-[#222]',
};

function Palette() {
  return (
    <aside className="flex w-[161px] shrink-0 flex-col">
      <div className="flex h-[26px] shrink-0 justify-between">
        <ActiveTab className="w-[81px] gap-[8px] pl-[4px]" label="Palette" icon={<PaletteIcon />} />
        <div className="flex h-[20px] items-center gap-[7px] pr-[5px]">
          <IconButton label="Palette filter">
            <Icon>
              <path d="M0.500 1h10L7 6v8.500L4.500 12V6z" fill="#4b505c" />
              <circle cx="12" cy="4" r="2" stroke="#4b505c" />
              <path d="M10 9h6M10 12h6M10 14.500h6" stroke="#4b505c" strokeWidth="1.100" />
            </Icon>
          </IconButton>
          <WindowButtons />
        </div>
      </div>
      <div className="flex min-h-0 flex-1 gap-px border-r border-b border-l border-[#cfcfcf] bg-white pr-px">
        <div className="flex min-w-0 flex-1 flex-col">
          <div className="flex h-[23px] shrink-0 items-center border border-[#b0b0b0] pr-[4px]">
            <input
              type="text"
              aria-label="Find component"
              defaultValue="Find component..."
              className="min-w-0 flex-1 pl-[3px] text-[#222] outline-none"
            />
            <IconButton label="Search">
              <Icon className="size-[15px]">
                <circle cx="7" cy="7" r="5.800" stroke="#4b505c" strokeWidth="1.700" />
                <path d="M11 11l4.500 4.500" stroke="#4b505c" strokeWidth="2" />
              </Icon>
            </IconButton>
          </div>
          <ul className="mt-[4px] mb-[4px] flex min-h-0 flex-1 flex-col border-t border-[#e2e2e2]">
            {PALETTE.map((row) => (
              <li
                key={row.label}
                className={clsx(
                  'flex min-h-0 basis-0 items-center gap-[3px] border-b border-[#e2e5e7] whitespace-nowrap',
                  rowStyle[row.kind]
                )}
              >
                {row.icon && <Icon className="size-[13px]">{row.icon}</Icon>}
                {row.label}
              </li>
            ))}
          </ul>
        </div>
        <ScrollBar>
          <div className="h-[57px] w-[13px] bg-[#cdcdcd]" />
        </ScrollBar>
      </div>
    </aside>
  );
}

/* ---------- bottom bars ---------- */

function StatusBar() {
  return (
    <footer className="flex h-[32px] shrink-0 items-center gap-[4px] pt-[6px] pl-[3px] text-[#222]">
      <DbIcon />
      <span className="flex-1">1 item selected</span>
      <div className="mr-[249px] h-[13px] border-l border-dotted border-[#aaa]" />
    </footer>
  );
}

const TASKS = [
  { label: 'Start', art: <path d="M14 12l6-1v2h-6zM21 10.800l7-1V13h-7z" fill="#fff" /> },
  { label: 'Task view', art: <path d="M16 13v-2h10v2" fill="none" stroke="#fff" strokeWidth="1.500" /> },
  {
    label: 'Store',
    art: (
      <>
        <path d="M13 13l1-3 14-1 2 4z" fill="#fff" />
        <path d="M17 10c0-4 8-4 8-0.500" fill="none" stroke="#fff" strokeWidth="1.500" />
      </>
    ),
  },
  { label: 'Files', art: <path d="M12 13V9.500h7l1.500 1.500H30v2z" fill="#f7d774" /> },
  { label: 'Browser', art: <circle cx="21.500" cy="17" r="10" fill="#d9483b" /> },
  { label: 'Reader', art: <path d="M12.500 13v-3l2-1.500h14l2 1.500v3z" fill="#e2231a" /> },
  {
    label: 'Slides',
    art: (
      <>
        <path d="M14 8h13v5H14z" fill="#d24726" />
        <circle cx="19" cy="12" r="2" fill="#3a1a10" />
      </>
    ),
  },
  { label: 'Maps', art: <path d="M13 9l8 2 8-1.500V13H16z" fill="#93c86b" /> },
  { label: 'Chrome', art: <circle cx="21.500" cy="17" r="10" fill="#d9483b" /> },
  {
    label: 'Paint',
    art: (
      <>
        <ellipse cx="20" cy="15" rx="9" ry="4" fill="#d9ecf7" />
        <path d="M23 12l5-4" stroke="#e7a35a" strokeWidth="3" />
      </>
    ),
  },
  {
    label: 'Talend',
    active: true,
    art: (
      <>
        <circle cx="21" cy="16" r="9" fill="#1d66a8" stroke="#a9cbe8" strokeWidth="1.200" />
        <circle cx="21" cy="16" r="5.500" fill="none" stroke="#e9f2f9" strokeWidth="1.200" />
      </>
    ),
  },
  {
    label: 'Workbench',
    art: (
      <>
        <path d="M11 8h20v5H11z" fill="#2b6699" />
        <path d="M14 9l7 3.500M26 9.500l3 3.500" stroke="#fff" strokeWidth="1.200" />
      </>
    ),
  },
];

function Taskbar() {
  return (
    <div className="relative flex h-[13px] shrink-0 overflow-hidden bg-[#221d18] text-white">
      {/* wallpaper showing through the translucent bar */}
      <div className="absolute inset-0 flex pl-[53px] leading-[11px] whitespace-nowrap text-[#0b0907]">
        {[0, 1, 2, 3].map((i) => (
          <span key={i} className="w-[324px] shrink-0">
            you and not to harm you, plans to give
          </span>
        ))}
      </div>
      <div className="relative flex">
        {TASKS.map((task) => (
          <button
            key={task.label}
            type="button"
            aria-label={task.label}
            className={clsx('h-[13px] w-[43px]', task.active && 'bg-white/20')}
          >
            <svg viewBox="0 0 43 13" className="h-[13px] w-[43px]" aria-hidden="true">
              {task.art}
            </svg>
          </button>
        ))}
      </div>
      <div className="relative ml-auto flex gap-[8px] pr-[25px]">
        <svg viewBox="0 0 104 13" className="h-[13px] w-[104px]" aria-hidden="true">
          <circle cx="14" cy="16" r="12" fill="#2fa36b" stroke="#e8f3ee" strokeWidth="1.500" />
          <path d="M14 6v7M11 13l3-4 3 4" stroke="#fff" strokeWidth="1.500" fill="none" />
          <path d="M72 13l2-2M80 10v3" stroke="#ddd" />
          <path d="M89 10h14v3H89z" fill="#fff" />
        </svg>
        <span className="mt-[3px] w-[42px] leading-[12px]">ENG</span>
        <span className="mt-[3px] leading-[12px]">13:45</span>
      </div>
    </div>
  );
}

export default function App() {
  return (
    <div className="flex h-screen flex-col overflow-hidden bg-[#e4e4e4] font-['Lato','Open_Sans',sans-serif] text-[11px] leading-[14px]">
      <MenuBar />
      <Toolbar />
      <main className="flex min-h-0 flex-1 gap-[10px] pt-[10px] pr-[9px] pl-[10px]">
        <div className="flex w-[350px] shrink-0 flex-col gap-[11px]">
          <Repository />
          <Outline />
        </div>
        <div className="flex min-w-0 flex-1 flex-col gap-[11px]">
          <JobEditor />
          <JobSettings />
        </div>
        <Palette />
      </main>
      <StatusBar />
      <Taskbar />
    </div>
  );
}
